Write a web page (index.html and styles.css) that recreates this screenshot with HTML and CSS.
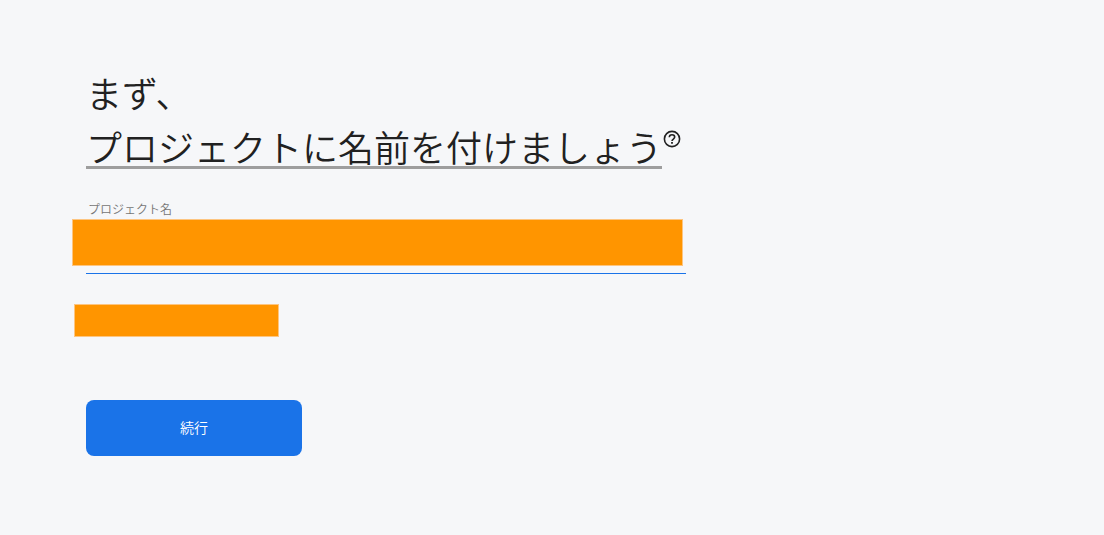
FILE: index.html
```html
<!DOCTYPE html>
<html lang="ja">
<head>
<meta charset="utf-8">
<meta name="viewport" content="width=device-width, initial-scale=1">
<title>プロジェクトの作成</title>
<link rel="stylesheet" href="styles.css">
</head>
<body>
<main class="page">
  <form class="form">
    <h1 class="title">
      <span class="title-lead">まず、</span>
      <span class="title-row">
        <span class="title-main">プロジェクトに名前を付けましょう</span>
        <button class="help" type="button" aria-label="ヘルプ">
          <svg class="help-icon" viewBox="0 0 18 18" fill="none" stroke="currentColor" aria-hidden="true">
            <circle cx="9" cy="9" r="7.6" stroke-width="1.6"/>
            <path d="M6.3 7.3C6.3 5.7 7.4 4.7 9 4.7s2.7 1 2.7 2.4c0 1.9-2.7 2-2.7 4" stroke-width="1.6"/>
            <path d="M9 12v1.8" stroke-width="1.8"/>
          </svg>
        </button>
      </span>
    </h1>
    <div class="field">
      <label class="field-label" for="project-name">プロジェクト名</label>
      <input class="field-input" id="project-name" type="text">
    </div>
    <div class="project-id"></div>
    <button class="submit" type="submit">続行</button>
  </form>
</main>
</body>
</html>
```
FILE: styles.css
```css
* {
  box-sizing: border-box;
}

body {
  margin: 0;
  background: #f6f7f9;
  color: #212121;
  font-family: "Noto Sans CJK JP", sans-serif;
}

.page {
  padding: 65px 86px 79px;
}

.form {
  max-width: 600px;
}

.title {
  margin: 0;
  font-size: 36px;
  font-weight: 350;
  line-height: 54px;
}

.title-lead {
  display: block;
}

.title-row {
  display: flex;
  align-items: flex-start;
  gap: 1px;
  padding-top: 9px;
}

.title-main {
  padding-bottom: 2px;
  border-bottom: 3px solid #9e9e9e;
  line-height: 36px;
}

.help {
  display: flex;
  margin-top: 2px;
  padding: 0;
  border: 0;
  background: none;
  color: #212121;
}

.help-icon {
  width: 18px;
  height: 18px;
}

.field {
  margin-top: 32px;
  padding-bottom: 7px;
  border-bottom: 1px solid #1a73e8;
}

.field-label {
  display: block;
  padding-left: 2px;
  color: #757575;
  font-size: 12px;
  font-weight: 350;
  line-height: 16px;
}

.field-input {
  display: block;
  width: calc(100% + 11px);
  height: 47px;
  margin: 2px 0 0 -14px;
  padding: 0 14px;
  border: 1px solid #fdc580;
  background: #ff9500;
  color: #212121;
  font: inherit;
}

.project-id {
  width: 205px;
  height: 33px;
  margin: 30px 0 0 -12px;
  border: 1px solid #fdc580;
  background: #ff9500;
}

.submit {
  display: block;
  width: 216px;
  height: 56px;
  margin-top: 63px;
  padding: 0 0 2px;
  border: 0;
  border-radius: 8px;
  background: #1a73e8;
  color: #fff;
  font-family: inherit;
  font-size: 14px;
  font-weight: 350;
}
```
